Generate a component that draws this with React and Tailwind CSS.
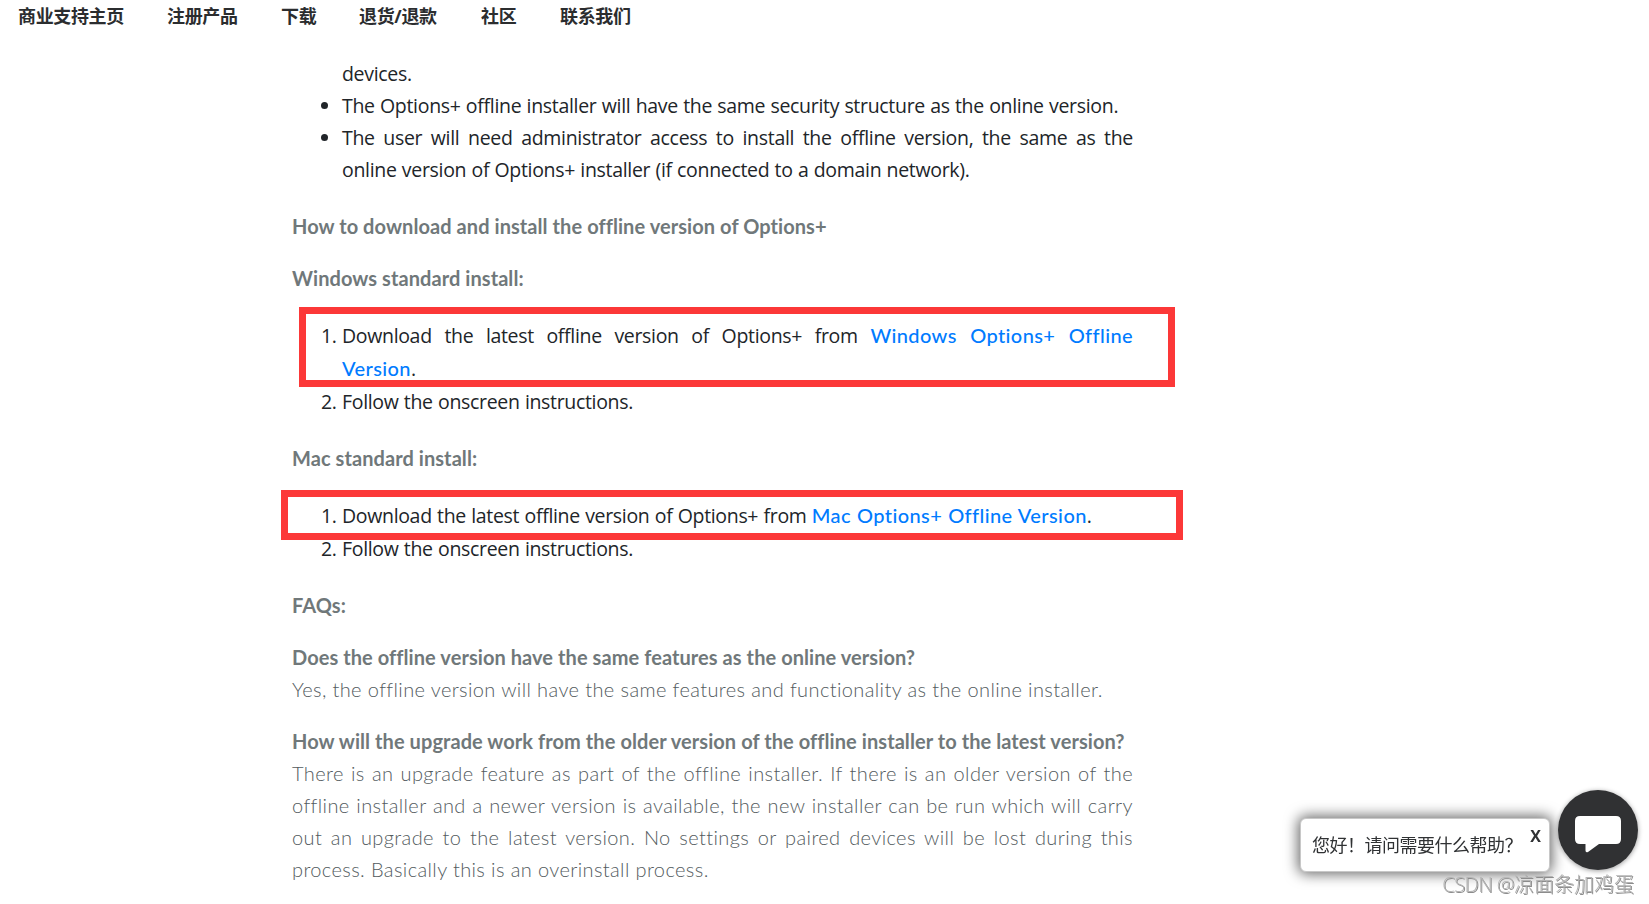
/**
 * Support article page
 *
 * - Top navigation bar
 * - Article body with the offline installer steps and FAQs
 * - Chat prompt and launcher in the bottom right corner
 */

const navLinks = [
  { name: '商业支持主页', width: 'w-[149px]' },
  { name: '注册产品', width: 'w-[114px]' },
  { name: '下载', width: 'w-[78px]' },
  { name: '退货/退款', width: 'w-[122px]' },
  { name: '社区', width: 'w-[79px]' },
  { name: '联系我们', width: 'w-[80px]' },
];

function Header() {
  return (
    <header className="h-[58px] pl-[18px]">
      <nav className="flex h-8 items-center text-lg font-bold tracking-[-0.35px] text-[#2b2d2f] font-['Open_Sans','Noto_Sans_CJK_SC',sans-serif]">
        {navLinks.map((link) => (
          <a key={link.name} href="#" className={`shrink-0 whitespace-nowrap ${link.width}`}>
            {link.name}
          </a>
        ))}
      </nav>
    </header>
  );
}

// One line of copy, optionally stretched to the full column
function Line({ children, justify }) {
  return (
    <span className={`block whitespace-nowrap ${justify ? 'text-justify [text-align-last:justify]' : ''}`}>
      {children}
    </span>
  );
}

function Heading({ children, className = '' }) {
  return (
    <h4 className={`whitespace-nowrap font-['Lato',sans-serif] text-xl leading-8 font-bold tracking-[0.07px] text-[#70787a] ${className}`}>
      {children}
    </h4>
  );
}

function Answer({ children }) {
  return (
    <p className="font-['Lato',sans-serif] text-xl leading-8 font-light tracking-[0.39px] text-[#535b5e]">
      {children}
    </p>
  );
}

function DownloadLink({ children }) {
  return (
    <a href="#" className="font-['Lato',sans-serif] text-xl leading-none font-medium tracking-[0.4px] text-[#007bff]">
      {children}
    </a>
  );
}

function Steps({ children, className = '' }) {
  return (
    <ol className={`relative list-decimal pl-[50px] leading-[33px] tracking-[-0.33px] [word-spacing:0.6px] ${className}`}>
      {children}
      <li>
        <Line>Follow the onscreen instructions.</Line>
      </li>
    </ol>
  );
}

function Article() {
  return (
    <main className="ml-[292px] w-[841px] font-['Open_Sans',sans-serif] text-[19.5px] leading-8 text-[#212529]">
      <ul className="list-disc pl-[50px] tracking-[-0.31px] [word-spacing:0.5px]">
        <li className="list-none">
          <Line>devices.</Line>
        </li>
        <li>
          <Line>The Options+ offline installer will have the same security structure as the online version.</Line>
        </li>
        <li>
          <Line justify>The user will need administrator access to install the offline version, the same as the</Line>
          <Line>online version of Options+ installer (if connected to a domain network).</Line>
        </li>
      </ul>

      <Heading className="mt-6">How to download and install the offline version of Options+</Heading>
      <Heading className="mt-5">Windows standard install:</Heading>

      <Steps className="mt-[25px]">
        <li>
          <Line justify>
            Download the latest offline version of Options+ from{' '}
            <DownloadLink>Windows Options+ Offline</DownloadLink>
          </Line>
          <Line>
            <DownloadLink>Version</DownloadLink>.
          </Line>
        </li>
        <span className="absolute -top-[12px] left-[7px] h-[80px] w-[876px] border-7 border-[#fc3838]" />
      </Steps>

      <Heading className="mt-6">Mac standard install:</Heading>

      <Steps className="mt-[25px]">
        <li>
          <Line>
            Download the latest offline version of Options+ from{' '}
            <DownloadLink>Mac Options+ Offline Version</DownloadLink>.
          </Line>
        </li>
        <span className="absolute -top-[9px] -left-[11px] h-[50px] w-[902px] border-7 border-[#fc3838]" />
      </Steps>

      <Heading className="mt-6">FAQs:</Heading>

      <Heading className="mt-5">Does the offline version have the same features as the online version?</Heading>
      <Answer>
        <Line>Yes, the offline version will have the same features and functionality as the online installer.</Line>
      </Answer>

      <Heading className="mt-5">
        How will the upgrade work from the older version of the offline installer to the latest version?
      </Heading>
      <Answer>
        <Line justify>There is an upgrade feature as part of the offline installer. If there is an older version of the</Line>
        <Line justify>offline installer and a newer version is available, the new installer can be run which will carry</Line>
        <Line justify>out an upgrade to the latest version. No settings or paired devices will be lost during this</Line>
        <Line>process. Basically this is an overinstall process.</Line>
      </Answer>
    </main>
  );
}

function ChatWidget() {
  return (
    <aside className="fixed right-[11px] bottom-[34px] flex items-end gap-2 font-['Open_Sans','Noto_Sans_CJK_SC',sans-serif] text-[#303234]">
      <div className="-mb-0.5 flex h-[54px] w-[250px] justify-between rounded-md border border-[#c8c8c8] bg-white pr-2 pl-[11px] shadow-[0_0_14px_2px_rgba(0,0,0,0.6)]">
        <p className="self-center text-lg tracking-[-0.5px] whitespace-nowrap">您好！请问需要什么帮助？</p>
        <button className="-ml-3 h-[34px] text-base font-bold" aria-label="Close">X</button>
      </div>
      <button className="h-20 w-20 rounded-full bg-[#303133] shadow-[0_1px_5px_rgba(0,0,0,0.4)]" aria-label="Open chat">
        <svg viewBox="0 0 80 80" className="h-20 w-20" fill="#fff">
          <path d="M22 26h36q5 0 5 5v18q0 5-5 5H41l-11 8q-2.500 1-2.500-1.500V54H22q-5 0-5-5V31q0-5 5-5z" />
        </svg>
      </button>
    </aside>
  );
}

function App() {
  return (
    <div className="relative h-[904px] overflow-hidden bg-white">
      <Header />
      <Article />
      <ChatWidget />
      <span className="absolute right-[15px] bottom-1 text-xl leading-[30px] font-light whitespace-nowrap text-[#b4b4b4] [text-shadow:1px_1px_0_#8c8c8c] font-['Open_Sans','Noto_Sans_CJK_SC',sans-serif]">
        <span className="tracking-[-0.5px]">CSDN @</span>凉面条加鸡蛋
      </span>
    </div>
  );
}

export default App;
